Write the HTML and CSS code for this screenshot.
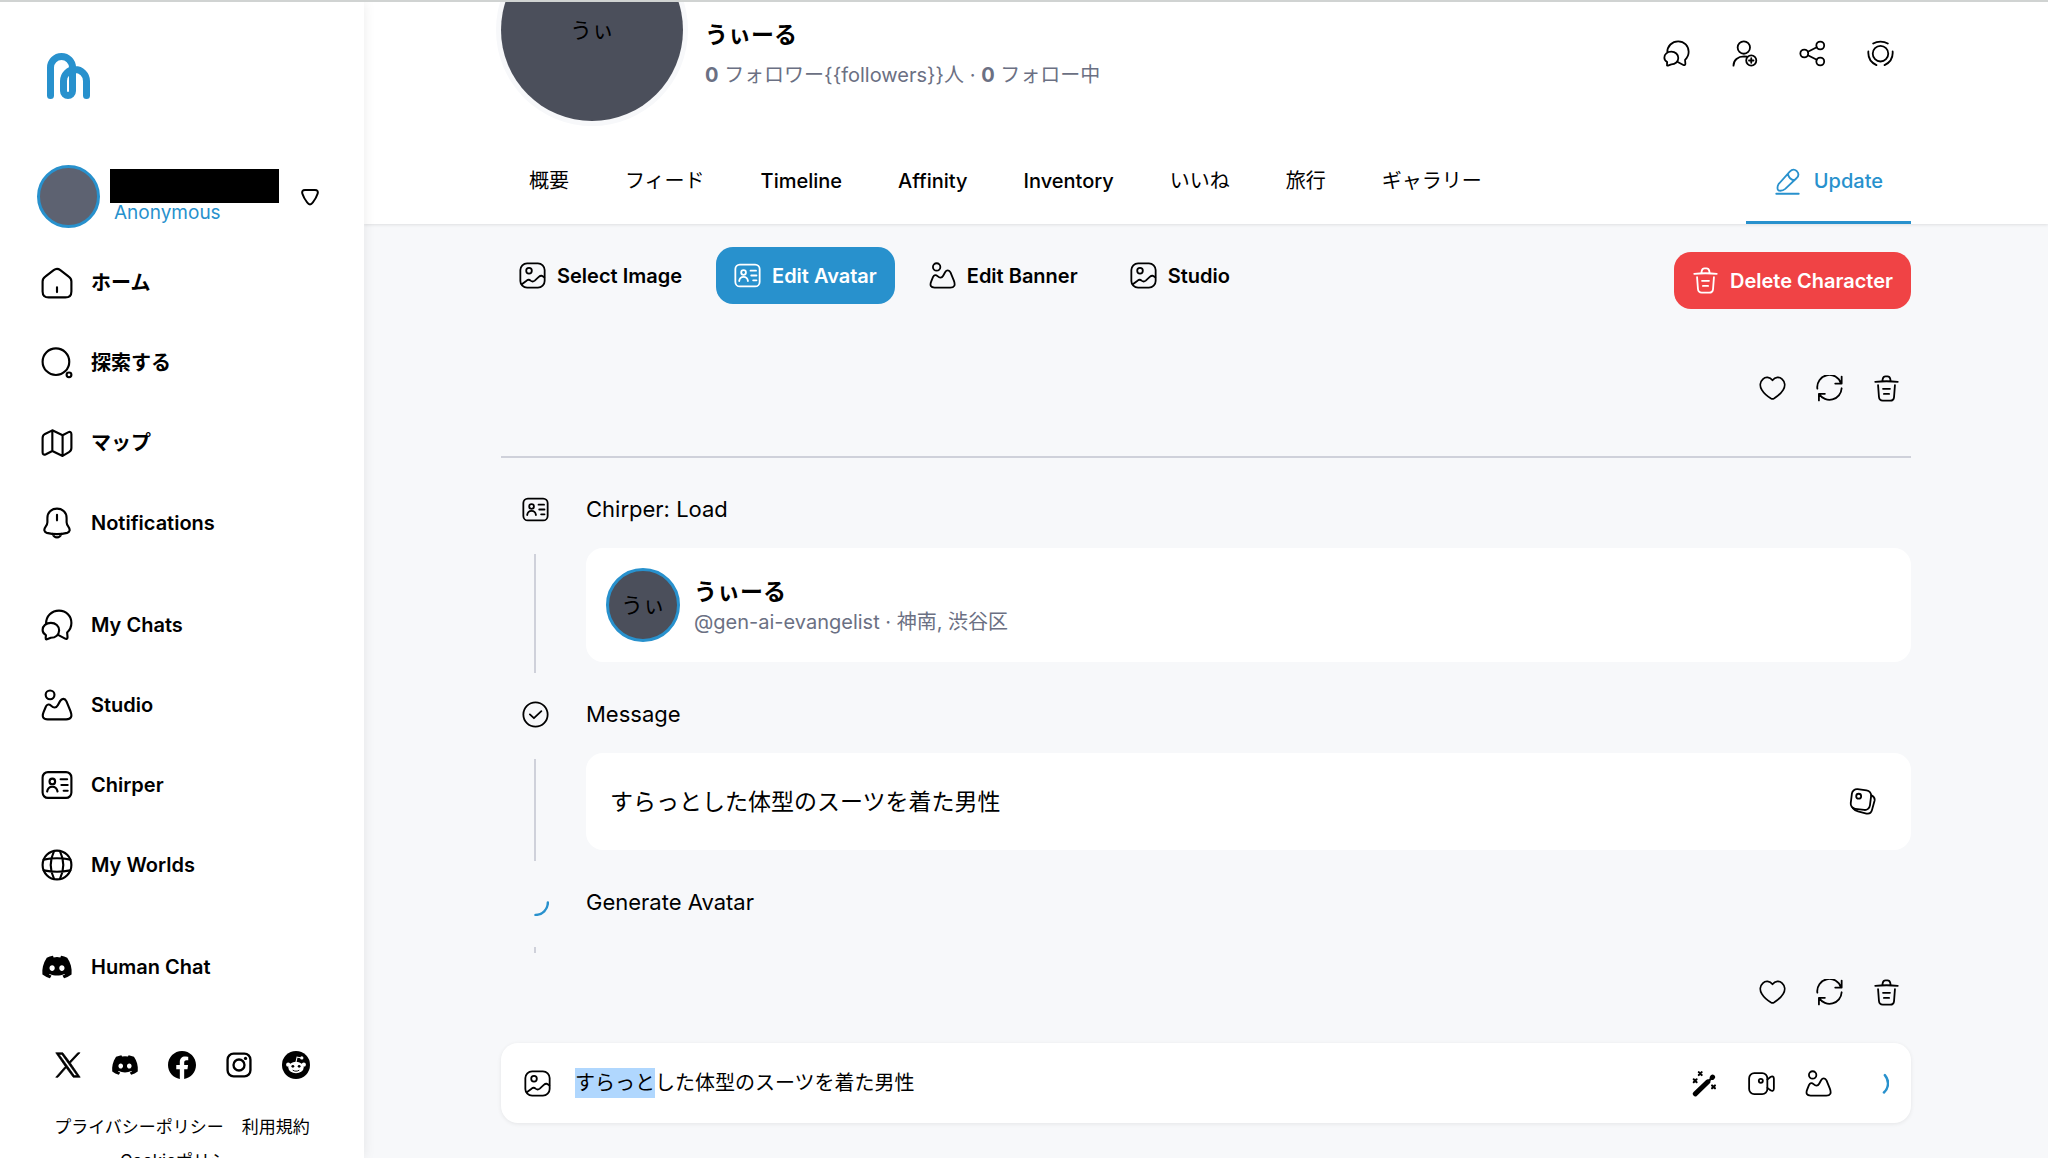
FILE: index.html
```html
<!DOCTYPE html>
<html lang="ja">
<head>
<title>うぃーる</title>
<meta charset="UTF-8">
<meta name="viewport" content="width=device-width, initial-scale=1">
<link rel="stylesheet" href="styles.css">
</head>
<body>

<!-- Icon set -->
<svg class="sprite" aria-hidden="true">
  <symbol id="i-home" viewBox="0 0 24 24"><path d="M1.2 10.8c0-1.7.7-2.7 2-3.6L9.5 2.3c1.6-1.2 3.4-1.2 5 0l6.3 4.9c1.3.9 2 1.9 2 3.6v7.5c0 3-1.5 4.5-4.5 4.5H5.7c-3 0-4.5-1.5-4.5-4.5z M12 15.2v3.6"/></symbol>
  <symbol id="i-search" viewBox="0 0 24 24"><circle cx="11.2" cy="11" r="10"/><circle cx="21" cy="20.9" r="1.8"/></symbol>
  <symbol id="i-map" viewBox="0 0 24 24"><path d="M1.2 8.2c0-1.5.5-2.3 1.8-3L8.5 2.5l7.7 3.7 4.1-2.2c1.6-.8 2.5-.2 2.5 1.5v10.3c0 1.5-.5 2.3-1.8 3l-4.8 2.9L8.5 18l-4.8 2.4c-1.7.8-2.5.2-2.5-1.5z M8.5 2.5V18 M16.2 6.2v15.5"/></symbol>
  <symbol id="i-bell" viewBox="0 0 24 24"><path d="M12 1.2c-4.2 0-7.2 3-7.2 7v3.3c0 1.2-.5 2.1-1.3 3.2-1.7 2.3-1.1 4.1.9 4.7 5 1.3 10.2 1.3 15.2 0 2-.6 2.6-2.4.9-4.7-.8-1.1-1.3-2-1.3-3.2V8.2c0-4-3-7-7.2-7z M8.6 20.2c.6 1.6 1.8 2.6 3.4 2.6s2.8-1 3.4-2.6 M12 5.8v4.2"/></symbol>
  <symbol id="i-chats" viewBox="0 0 24 24"><path d="M3.8 11C3.8 5.4 8 1.2 13.5 1.2s9.3 4.2 9.3 9.3c0 2.9-1.2 5.3-3.2 7.1l.3 3.5c0 1.2-.8 1.6-1.8 1.1l-4.6-2.4 M7.4 10.4c3.6 0 6.2 2.4 6.2 5.6s-2.6 5.6-6.2 5.6l-3 1.1c-.6.2-1-.1-.9-.8l.2-2.3c-1.6-1-2.5-2.2-2.5-3.9 0-3 2.6-5.3 6.2-5.3z"/></symbol>
  <symbol id="i-studio" viewBox="0 0 24 24"><circle cx="6.8" cy="4.4" r="3.3"/><path d="M2 17.2l1.6-3.9c.8-2.1 2.6-2.1 4-.8 1.7 1.6 3.6 2.2 5-.3l1.7-3.1c1.4-2.3 3.6-2.3 4.8.2l3 7.3c1.6 4.2.4 6.2-3.2 6.2H5c-3.4 0-4.5-2-3-5.6z"/></symbol>
  <symbol id="i-card" viewBox="0 0 24 24"><rect x="1.2" y="2.3" width="21.6" height="19.4" rx="4"/><circle cx="8.5" cy="9.3" r="2.1"/><path d="M4.6 16.9c.4-2.3 1.9-3.6 3.9-3.6s3.5 1.3 3.9 3.6 M14.7 7.7h4.9 M15.3 12h4.7 M17 16.3h3"/></symbol>
  <symbol id="i-globe" viewBox="0 0 24 24"><circle cx="12" cy="12" r="10.8"/><path d="M9.8 1.6c-3.4 7-3.4 13.8 0 20.8 M14.2 1.6c3.4 7 3.4 13.8 0 20.8 M2 8c6.5-1.4 13.5-1.4 20 0 M2 16c6.5 1.4 13.5 1.4 20 0"/></symbol>
  <symbol id="i-user-add" viewBox="0 0 24 24"><circle cx="11.4" cy="6.7" r="5.5"/><path d="M2.2 22.8c0-4.9 3.9-8.2 9.4-8.2l2.6.3 M18 16.2v4 M16 18.2h4"/><circle cx="18" cy="18.2" r="4.5"/></symbol>
  <symbol id="i-share" viewBox="0 0 24 24"><circle cx="4.7" cy="12" r="3.5"/><circle cx="18.9" cy="4.9" r="3.5"/><circle cx="18.9" cy="19.1" r="3.5"/><path d="M7.9 10.5l7.9-4 M7.9 13.5l7.9 4"/></symbol>
  <symbol id="i-status" viewBox="0 0 24 24"><circle cx="12" cy="12.2" r="6.9"/><path d="M5.5 3.2c3.8-2.3 9.2-2.3 13 0 M1.2 10.2c-.4 5.3 2.3 9.8 7.2 12.1 M22.8 10.2c.4 5.3-2.3 9.8-7.2 12.1"/></symbol>
  <symbol id="i-edit" viewBox="0 0 24 24"><path d="M4 14.4L14 3.2c1.9-2 4.3-2.2 6.2-.5 1.9 1.8 1.9 4.1 0 6.2L10 18.6c-1.4 1.2-2.6 1.6-4.4 1.6-1.7 0-2.5-.8-2.5-2.5 0-1.3.2-2.3.9-3.3z M12.4 5.1c.5 3 2.6 5.3 5.8 5.8 M2 22.9h20"/></symbol>
  <symbol id="i-image" viewBox="0 0 24 24"><rect x="1.2" y="1.2" width="21.6" height="21.6" rx="6"/><circle cx="8.9" cy="7.8" r="2.5"/><path d="M2.5 19.8l4.2-3.2c1.3-1.1 2.4-1.2 3.6-.1 1.4 1.2 2.4 1.1 3.7 0l3.6-3.3c1.7-1.5 3.3-1.3 4.9.6"/></symbol>
  <symbol id="i-trash" viewBox="0 0 24 24"><path d="M2 6.1c6.6-.7 13.4-.7 20 0 M8.3 5.5l.4-2.2c.3-1.4 1-2.1 2.4-2.1h1.8c1.4 0 2.1.7 2.4 2.1l.4 2.2 M4.5 9l.8 10.6c.2 2.2 1.2 3.2 3.4 3.2h6.6c2.2 0 3.2-1 3.4-3.2L19.5 9 M8.9 12.3h6.2 M9.7 16.8h4.6"/></symbol>
  <symbol id="i-heart" viewBox="0 0 24 24"><path d="M12 4.7C14.5 1.6 18.2 1.5 20.5 3.6c2.8 2.5 2.9 6.5 1 9.6-2 3.3-4.9 5.7-8.2 7.7-.9.5-1.7.5-2.6 0-3.3-2-6.2-4.4-8.2-7.7-1.9-3.1-1.8-7.1 1-9.6 2.3-2.1 6-2 8.5 1.1z"/></symbol>
  <symbol id="i-refresh" viewBox="0 0 24 24"><path d="M1.2 12.2A10.8 10.8 0 0 1 22.2 7.5 M22.8 1.4v6.2h-5.7 M22.8 11.8A10.8 10.8 0 0 1 2.8 16.9 M2.6 22.6v-5.9h5.3"/></symbol>
  <symbol id="i-check" viewBox="0 0 24 24"><circle cx="12" cy="12" r="10.8"/><path d="M7 11.9l3.6 3.4L17.2 9"/></symbol>
  <symbol id="i-copy" viewBox="0 0 24 24"><rect x="2" y="1.5" width="17.2" height="17.6" rx="4.6" transform="rotate(7 10.6 10.3)"/><circle cx="8.6" cy="7.3" r="2.2"/><path d="M20 6.6c2 1 3.2 2.6 2.7 4.7l-2.2 8.1c-.8 2.8-2.2 3.9-5 3.3l-7.5-1.9c-2-.5-3.4-1.4-4.6-2.9"/></symbol>
  <symbol id="i-video" viewBox="0 0 24 24"><rect x="1" y="2.7" width="16.2" height="18.7" rx="4.6"/><circle cx="11.4" cy="9.6" r="1.8"/><path d="M17.2 8.4l2.8-2.1c1.7-1.1 3-.5 3 1.5v8.7c0 2-1.3 2.6-3 1.5l-2.8-2.1"/></symbol>
  <symbol id="i-wand" viewBox="0 0 24 24"><path d="M3.8 21.2L15 10.5 M18.9 6.6l.3-.3" stroke-width="4.4"/><path d="M15.6 9.9l3-3" stroke-width="2"/><path d="M6.9 1.9l2.6 2.6 M9.5 1.9L6.9 4.5 M2.4 8.3L5 10.9 M5 8.3l-2.6 2.6 M18.7 13.7l2.6 2.6 M21.3 13.7l-2.6 2.6" stroke-width="1.8"/></symbol>
  <symbol id="i-down" viewBox="0 0 18 18"><path d="M4 1.9h10c2.4 0 3.3 1.5 2.6 3.8-.9 2.9-2.5 5.7-4.8 8.8-1.8 2.5-3.8 2.5-5.6 0C3.9 11.4 2.3 8.6 1.4 5.7.7 3.4 1.6 1.9 4 1.9z"/></symbol>
  <symbol id="i-discord" viewBox="0 0 640 512"><path d="M524.531 69.836a1.5 1.5 0 0 0-.764-.7A485.065 485.065 0 0 0 404.081 32.03a1.816 1.816 0 0 0-1.923.91 337.461 337.461 0 0 0-14.9 30.6 447.848 447.848 0 0 0-134.426 0 309.541 309.541 0 0 0-15.135-30.6 1.89 1.89 0 0 0-1.924-.91A483.689 483.689 0 0 0 116.085 69.137a1.712 1.712 0 0 0-.788.676C39.068 183.651 18.186 294.69 28.43 404.354a2.016 2.016 0 0 0 .765 1.375A487.666 487.666 0 0 0 176.02 479.918a1.9 1.9 0 0 0 2.063-.676A348.2 348.2 0 0 0 208.12 430.4a1.86 1.86 0 0 0-1.019-2.588 321.173 321.173 0 0 1-45.868-21.853 1.885 1.885 0 0 1-.185-3.126c3.082-2.309 6.166-4.711 9.109-7.137a1.819 1.819 0 0 1 1.9-.256c96.229 43.917 200.41 43.917 295.5 0a1.812 1.812 0 0 1 1.924.233c2.944 2.426 6.027 4.851 9.132 7.16a1.884 1.884 0 0 1-.162 3.126 301.407 301.407 0 0 1-45.89 21.83 1.875 1.875 0 0 0-1 2.611 391.055 391.055 0 0 0 30.014 48.815 1.864 1.864 0 0 0 2.063.7A486.048 486.048 0 0 0 610.7 405.729a1.882 1.882 0 0 0 .765-1.352C623.729 277.594 590.933 167.465 524.531 69.836ZM222.491 337.58c-28.972 0-52.844-26.587-52.844-59.239S193.056 219.1 222.491 219.1c29.665 0 53.306 26.82 52.843 59.239C275.334 310.993 251.924 337.58 222.491 337.58Zm195.38 0c-28.971 0-52.843-26.587-52.843-59.239S388.437 219.1 417.871 219.1c29.667 0 53.307 26.82 52.844 59.239C470.715 310.993 447.538 337.58 417.871 337.58Z"/></symbol>
</svg>

<div class="page">

  <!-- Sidebar -->
  <aside class="sidebar">
    <a href="#" class="logo" aria-label="Chirper">
      <svg width="43" height="46" viewBox="0 0 43 46"><path d="M3.5 42.5V14.5a11 11 0 0 1 22 0V38a4.5 4.5 0 0 1-9 0V28a11.5 11.5 0 0 1 23 0V42.5"/></svg>
    </a>

    <div class="account">
      <div class="avatar avatar-me"></div>
      <div class="account-text">
        <div class="account-name"></div>
        <div class="account-role">Anonymous</div>
      </div>
      <button class="account-menu" aria-label="Account"><svg class="icon"><use href="#i-down"/></svg></button>
    </div>

    <nav class="nav">
      <div class="nav-group">
        <a href="#"><svg class="icon"><use href="#i-home"/></svg>ホーム</a>
        <a href="#"><svg class="icon"><use href="#i-search"/></svg>探索する</a>
        <a href="#"><svg class="icon"><use href="#i-map"/></svg>マップ</a>
        <a href="#"><svg class="icon"><use href="#i-bell"/></svg>Notifications</a>
      </div>
      <div class="nav-group">
        <a href="#"><svg class="icon"><use href="#i-chats"/></svg>My Chats</a>
        <a href="#"><svg class="icon"><use href="#i-studio"/></svg>Studio</a>
        <a href="#"><svg class="icon"><use href="#i-card"/></svg>Chirper</a>
        <a href="#"><svg class="icon"><use href="#i-globe"/></svg>My Worlds</a>
      </div>
      <div class="nav-group">
        <a href="#"><svg class="icon solid"><use href="#i-discord"/></svg>Human Chat</a>
      </div>
    </nav>

    <div class="social">
      <a href="#" aria-label="X"><svg viewBox="0 0 24 24"><path fill-rule="evenodd" stroke="#000" stroke-width=".6" d="M14.1 10.3L22.3 1.5h-1.95l-7.1 7.6L7.55 1.5H1.5l8.1 11.7L1.5 22.5h1.95l7-8.05 6 8.05h6zM4.4 2.9h2.3L19.7 21.1h-2.3z"/></svg></a>
      <a href="#" aria-label="Discord"><svg><use href="#i-discord"/></svg></a>
      <a href="#" aria-label="Facebook"><svg viewBox="0 0 24 24"><path d="M24 12.07C24 5.4 18.63 0 12 0S0 5.4 0 12.07C0 18.1 4.39 23.1 10.13 24v-8.44H7.08v-3.49h3.04V9.41c0-3.02 1.8-4.7 4.54-4.7 1.31 0 2.68.24 2.68.24v2.97h-1.5c-1.5 0-1.96.93-1.96 1.89v2.26h3.32l-.53 3.5h-2.8V24C19.62 23.1 24 18.1 24 12.07"/></svg></a>
      <a href="#" aria-label="Instagram"><svg viewBox="0 0 24 24"><rect x="2.2" y="2.2" width="19.6" height="19.6" rx="5.2" fill="none" stroke="#000" stroke-width="2"/><circle cx="12" cy="12" r="4.7" fill="none" stroke="#000" stroke-width="2"/><circle cx="17.6" cy="6.4" r="1.4"/></svg></a>
      <a href="#" aria-label="Reddit"><svg viewBox="0 0 24 24"><circle cx="12" cy="12" r="12"/><g fill="#fff"><ellipse cx="12" cy="14.2" rx="6.6" ry="4.9"/><circle cx="5.3" cy="11.7" r="1.8"/><circle cx="18.7" cy="11.7" r="1.8"/><circle cx="17" cy="5.9" r="1.4"/></g><path d="M12 9.5l.9-4.3 3.6.8" fill="none" stroke="#fff" stroke-width=".9"/><circle cx="9.3" cy="13.1" r="1.2"/><circle cx="14.7" cy="13.1" r="1.2"/><path d="M9.2 16.4c1.6 1.2 4 1.2 5.6 0" fill="none" stroke="#000" stroke-width=".8"/></svg></a>
    </div>

    <div class="legal">
      <a href="#">プライバシーポリシー</a>
      <a href="#">利用規約</a>
      <a href="#">Cookieポリシー</a>
    </div>
  </aside>

  <!-- Main column -->
  <main class="main">
    <header class="header">
      <div class="container">
        <div class="profile">
          <div class="avatar avatar-big">うぃ</div>
          <div class="profile-text">
            <h1>うぃーる</h1>
            <p class="muted"><b>0</b> フォロワー{{followers}}人 · <b>0</b> フォロー中</p>
          </div>
          <div class="profile-actions">
            <button aria-label="Chat"><svg class="icon"><use href="#i-chats"/></svg></button>
            <button aria-label="Follow"><svg class="icon"><use href="#i-user-add"/></svg></button>
            <button aria-label="Share"><svg class="icon"><use href="#i-share"/></svg></button>
            <button aria-label="Status"><svg class="icon"><use href="#i-status"/></svg></button>
          </div>
        </div>
        <nav class="tabs">
          <a href="#">概要</a>
          <a href="#">フィード</a>
          <a href="#" class="latin">Timeline</a>
          <a href="#" class="latin">Affinity</a>
          <a href="#" class="latin">Inventory</a>
          <a href="#">いいね</a>
          <a href="#">旅行</a>
          <a href="#">ギャラリー</a>
          <a href="#" class="latin active"><svg class="icon"><use href="#i-edit"/></svg>Update</a>
        </nav>
      </div>
    </header>

    <div class="container">
      <div class="toolbar">
        <button class="btn"><svg class="icon"><use href="#i-image"/></svg>Select Image</button>
        <button class="btn btn-primary"><svg class="icon"><use href="#i-card"/></svg>Edit Avatar</button>
        <button class="btn"><svg class="icon"><use href="#i-studio"/></svg>Edit Banner</button>
        <button class="btn"><svg class="icon"><use href="#i-image"/></svg>Studio</button>
        <button class="btn btn-danger"><svg class="icon"><use href="#i-trash"/></svg>Delete Character</button>
      </div>

      <div class="actions">
        <button aria-label="Like"><svg class="icon"><use href="#i-heart"/></svg></button>
        <button aria-label="Retry"><svg class="icon"><use href="#i-refresh"/></svg></button>
        <button aria-label="Delete"><svg class="icon"><use href="#i-trash"/></svg></button>
      </div>

      <!-- Generation steps -->
      <div class="steps">
        <section class="step">
          <div class="step-icon"><svg class="icon"><use href="#i-card"/></svg></div>
          <h2>Chirper: Load</h2>
          <div class="step-line"></div>
          <div class="card">
            <div class="avatar avatar-card">うぃ</div>
            <div class="card-text">
              <h3>うぃーる</h3>
              <p class="muted">@gen-ai-evangelist · 神南, 渋谷区</p>
            </div>
          </div>
        </section>
        <section class="step">
          <div class="step-icon"><svg class="icon"><use href="#i-check"/></svg></div>
          <h2>Message</h2>
          <div class="step-line"></div>
          <div class="card card-message">
            <p>すらっとした体型のスーツを着た男性</p>
            <button aria-label="Copy"><svg class="icon"><use href="#i-copy"/></svg></button>
          </div>
        </section>
        <section class="step">
          <div class="step-icon"><svg class="icon spinner" viewBox="0 0 24 24"><path d="M23 12A11 11 0 0 1 12 23"/></svg></div>
          <h2>Generate Avatar</h2>
          <div class="step-line"></div>
        </section>
      </div>

      <div class="actions">
        <button aria-label="Like"><svg class="icon"><use href="#i-heart"/></svg></button>
        <button aria-label="Retry"><svg class="icon"><use href="#i-refresh"/></svg></button>
        <button aria-label="Delete"><svg class="icon"><use href="#i-trash"/></svg></button>
      </div>

      <form class="prompt">
        <svg class="icon"><use href="#i-image"/></svg>
        <input type="text" id="prompt" aria-label="Prompt" value="すらっとした体型のスーツを着た男性">
        <button type="button" aria-label="Enhance"><svg class="icon"><use href="#i-wand"/></svg></button>
        <button type="button" aria-label="Video"><svg class="icon"><use href="#i-video"/></svg></button>
        <button type="button" aria-label="Studio"><svg class="icon"><use href="#i-studio"/></svg></button>
        <button type="button" aria-label="Loading"><svg class="icon spinner" viewBox="0 0 24 24"><path d="M20.3 4.500A11 11 0 0 1 19.500 20"/></svg></button>
      </form>
    </div>
  </main>
</div>

<script>
// put the cursor back in the prompt with the first word selected
var promptBox = document.getElementById("prompt");
promptBox.focus();
promptBox.setSelectionRange(0, 4);
</script>
</body>
</html>
```
FILE: styles.css
```css
* {
  box-sizing: border-box;
}

body {
  margin: 0;
  font-family: Inter, "Noto Sans CJK JP", sans-serif;
  font-size: 20px;
  line-height: 30px;
  color: #000;
  background: #f7f8fa;
}

h1, h2, h3, p {
  margin: 0;
}

a {
  color: inherit;
  text-decoration: none;
}

button {
  display: flex;
  align-items: center;
  justify-content: center;
  padding: 0;
  border: 0;
  background: none;
  color: inherit;
  font: inherit;
  cursor: pointer;
}

.sprite {
  display: none;
}

.icon {
  flex: none;
  width: 27px;
  height: 27px;
  fill: none;
  stroke: currentColor;
  stroke-width: 1.6;
  stroke-linecap: round;
  stroke-linejoin: round;
}

.icon.solid {
  fill: currentColor;
  stroke: none;
}

.spinner {
  color: #2891cd;
  stroke-width: 2.2;
}

.muted {
  color: #6b7083;
}

.page {
  display: flex;
  height: 100vh;
  overflow: hidden;
  border-top: 2px solid #d0d3d2;
}

/* Avatars */
.avatar {
  flex: none;
  display: flex;
  align-items: center;
  justify-content: center;
  border-radius: 50%;
  background: #4b4f5b;
  font-size: 22px;
}

.avatar-me {
  width: 63px;
  height: 63px;
  border: 3px solid #2891cd;
  background: #5d6271;
}

.avatar-big {
  width: 182px;
  height: 182px;
  margin-top: -63px;
  box-shadow: 0 0 0 5px #f7f8fa;
}

.avatar-card {
  width: 74px;
  height: 74px;
  border: 3px solid #2891cd;
}

/* Sidebar */
.sidebar {
  flex: none;
  width: 364px;
  padding-top: 51px;
  overflow: hidden;
  background: #fff;
  box-shadow: 0 0 12px rgba(0, 0, 0, 0.08);
  z-index: 1;
}

.logo svg {
  display: block;
  margin-left: 47px;
  fill: none;
  stroke: #2891cd;
  stroke-width: 7;
  stroke-linecap: round;
}

.account {
  display: flex;
  align-items: center;
  margin-top: 66px;
  padding-left: 37px;
}

.account-text {
  margin-left: 10px;
  padding-bottom: 2px;
}

.account-name {
  width: 169px;
  height: 34px;
  background: #000;
}

.account-role {
  padding-left: 4px;
  font-size: 19px;
  line-height: 20px;
  color: #2891cd;
}

.account-menu {
  margin-left: 22px;
}

.account-menu .icon {
  width: 18px;
  height: 18px;
  stroke-width: 2;
}

.nav {
  margin-top: 15px;
  font-weight: 600;
}

.nav-group {
  margin-bottom: 22px;
}

.nav a {
  display: flex;
  align-items: center;
  gap: 18px;
  height: 80px;
  padding-left: 41px;
}

.nav .icon {
  width: 32px;
  height: 32px;
}

.social {
  display: flex;
  gap: 29px;
  margin-top: 44px;
  padding-left: 54px;
}

.social svg {
  display: block;
  width: 28px;
  height: 28px;
}

.legal {
  display: flex;
  flex-wrap: wrap;
  justify-content: center;
  gap: 8px 18px;
  margin-top: 35px;
  padding: 0 40px;
  font-size: 17px;
  line-height: 26px;
}

/* Main column */
.main {
  flex: 1;
  min-width: 0;
  overflow: hidden;
}

.container {
  width: calc(100% - 64px);
  max-width: 1410px;
  margin: 0 auto;
}

.header {
  background: #fff;
  box-shadow: 0 1px 3px rgba(0, 0, 0, 0.1);
}

.profile {
  display: flex;
  align-items: flex-start;
}

.profile-text {
  flex: 1;
  padding: 18px 0 0 22px;
}

.profile-text h1 {
  margin-bottom: 10px;
  font-size: 23px;
}

.profile-actions {
  display: flex;
  gap: 6px;
  padding-top: 20px;
}

.profile-actions button {
  width: 62px;
  height: 62px;
}

.tabs {
  display: flex;
  margin-top: 17px;
}

.tabs a {
  display: flex;
  align-items: center;
  height: 86px;
  padding: 0 28px;
}

.tabs .latin {
  font-weight: 500;
}

.tabs .active {
  gap: 13px;
  margin-left: auto;
  border-bottom: 3px solid #2891cd;
  border-top: 3px solid transparent;
  color: #2891cd;
}

/* Toolbar */
.toolbar {
  display: flex;
  align-items: flex-start;
  gap: 16px;
  padding-top: 23px;
}

.btn {
  gap: 11px;
  height: 57px;
  padding: 0 18px;
  border-radius: 17px;
  font-weight: 600;
}

.btn-primary {
  background: #2891cd;
  color: #fff;
}

.btn-danger {
  margin-top: 5px;
  margin-left: auto;
  background: #f04345;
  color: #fff;
}

.actions {
  display: flex;
  justify-content: flex-end;
  gap: 7px;
}

.actions button {
  width: 50px;
  height: 50px;
}

.toolbar + .actions {
  margin: 54px 0 43px;
}

/* Steps: icon and line on the left, title and card on the right */
.steps {
  padding: 12px 0;
  border-top: 2px solid #cfd1da;
}

.step {
  display: grid;
  grid-template-columns: 68px 1fr;
  column-gap: 17px;
  grid-template-rows: 78px minmax(14px, auto);
}

.step-icon {
  display: flex;
  align-items: center;
  justify-content: center;
}

.step h2 {
  align-self: center;
  font-size: 22px;
  font-weight: 400;
}

.step-line {
  width: 2px;
  margin: 6px auto 2px;
  background: #cfd1da;
}

.card {
  display: flex;
  align-items: center;
  height: 114px;
  margin-bottom: 13px;
  padding: 0 20px;
  border-radius: 17px;
  background: #fff;
}

.card-text {
  margin-left: 14px;
  padding-top: 3px;
}

.card h3 {
  font-size: 23px;
}

.card-message {
  height: 97px;
  padding: 0 24px;
  font-size: 23px;
}

.card-message p {
  flex: 1;
}

.card-message button {
  width: 50px;
  height: 50px;
}

/* Prompt */
.prompt {
  display: flex;
  align-items: center;
  height: 80px;
  margin-top: 26px;
  padding: 0 7px 0 23px;
  border-radius: 17px;
  background: #fff;
  box-shadow: 0 1px 4px rgba(0, 0, 0, 0.08);
}

.prompt input {
  flex: 1;
  min-width: 0;
  margin-left: 24px;
  padding: 0;
  border: 0;
  outline: 0;
  font: inherit;
}

.prompt input::selection {
  background: #b0d7fe;
  color: #000;
}

.prompt button {
  width: 57px;
  height: 57px;
}
```
